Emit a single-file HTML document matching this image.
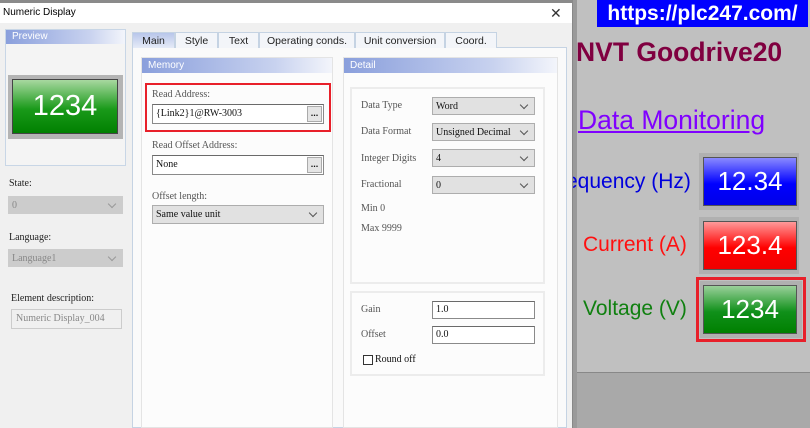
<!DOCTYPE html>
<html><head><meta charset="utf-8">
<style>
*{margin:0;padding:0;box-sizing:border-box}
body{width:810px;height:428px;overflow:hidden;position:relative;background:#c0c0c0;font-family:"Liberation Serif",serif;font-size:10px;color:#333}
.a{position:absolute}
.sans{font-family:"Liberation Sans",sans-serif}
.hdr{position:absolute;height:15px;background:linear-gradient(90deg,#8a9fdc,#c8d2ef 70%,#f3f5fb);color:#fff;font-family:"Liberation Sans",sans-serif;font-size:10px;line-height:15px;padding-left:6px}
.inp{position:absolute;background:#fff;border:1px solid #8a8a8a;border-top-color:#6a6a6a;font-size:10px;line-height:17px;padding-left:3px;color:#111}
.sel{position:absolute;background:#e1e1e1;border:1px solid #adadad;font-size:10px;line-height:17px;padding-left:3px;color:#111}
.sel:after{content:"";position:absolute;right:7px;top:4px;width:5px;height:5px;border-right:1px solid #555;border-bottom:1px solid #555;transform:rotate(45deg)}
.dis{background:#ccc;border-color:#ccc;color:#888}
.dis:after{border-color:#999}
.btn{position:absolute;right:1px;top:1px;width:15px;bottom:1px;background:#e5e5e5;border:1px solid #aaa;font-size:9px;text-align:center;line-height:12px;font-family:"Liberation Sans",sans-serif;font-weight:bold}
.tab{position:absolute;top:32px;height:16px;border:1px solid #c5d3e3;border-bottom:none;background:#f3f5f9;font-family:"Liberation Sans",sans-serif;font-size:10.5px;text-align:center;line-height:16px;color:#222}
.lbl{position:absolute;font-size:10px;color:#555}
.disp{position:absolute;color:#fff;font-family:"Liberation Sans",sans-serif;text-align:center}
</style></head><body>
<div class="a" style="left:573px;top:0;width:237px;height:428px;background:#c0c0c0"></div>
<div class="a" style="left:573px;top:372px;width:237px;height:56px;background:#a9a9a9;border-top:1px solid #888"></div>
<div class="a" style="left:573px;top:0;width:4px;height:428px;background:#9a9a9a"></div>
<div class="a sans" style="left:597px;top:0;width:211px;height:27px;background:#0000ff;color:#fff;font-weight:bold;font-size:21px;line-height:27px;text-align:center">https://plc247.com/</div>
<div class="a sans" style="left:576px;top:37px;color:#800040;font-weight:bold;font-size:26.5px;line-height:30px">NVT Goodrive20</div>
<div class="a sans" style="left:578px;top:104px;color:#8000ff;font-size:26.5px;line-height:32px;text-decoration:underline">Data Monitoring</div>
<div class="a sans" style="left:566px;top:168px;color:#0000dd;font-size:21px;line-height:28px">equency (Hz)</div>
<div class="a sans" style="left:583px;top:231px;color:#ff1010;font-size:21px;line-height:28px">Current (A)</div>
<div class="a sans" style="left:583px;top:295px;color:#108010;font-size:21px;line-height:28px">Voltage (V)</div>
<div class="a" style="left:699px;top:153px;width:100px;height:57px;background:#b0b0b0"></div>
<div class="disp" style="left:703px;top:157px;width:94px;height:49px;border:1px solid #555;background:linear-gradient(#8a8aff,#0000ff 55%,#0000e8);font-size:26px;line-height:47px">12.34</div>
<div class="a" style="left:699px;top:217px;width:100px;height:57px;background:#b0b0b0"></div>
<div class="disp" style="left:703px;top:221px;width:94px;height:49px;border:1px solid #555;background:linear-gradient(#ff9a9a,#ff0000 55%,#f00000);font-size:26px;line-height:47px">123.4</div>
<div class="a" style="left:696px;top:277px;width:110px;height:65px;border:3px solid #e8202a"></div>
<div class="a" style="left:700px;top:281px;width:102px;height:57px;background:#b0b0b0"></div>
<div class="disp" style="left:703px;top:285px;width:94px;height:49px;border:1px solid #555;background:linear-gradient(#9ad09a,#10901a 55%,#008000);font-size:26px;line-height:47px">1234</div>

<div class="a" style="left:0;top:0;width:573px;height:428px;background:#f0f0f0;border-right:1px solid #888"></div>
<div class="a" style="left:0;top:0;width:573px;height:3px;background:#8a8a8a"></div>
<div class="a sans" style="left:0;top:3px;width:572px;height:20px;background:#fff;font-size:10px;line-height:20px;padding-left:3px;color:#000">Numeric Display</div>
<div class="a sans" style="left:550px;top:3px;font-size:14px;line-height:20px;color:#333">✕</div>

<div class="a" style="left:5px;top:29px;width:121px;height:137px;border:1px solid #c8d6e6;background:#f4f4f4"></div>
<div class="hdr" style="left:6px;top:30px;width:119px;height:14px;line-height:14px">Preview</div>
<div class="a" style="left:8px;top:75px;width:115px;height:64px;background:#b4b4b4"></div>
<div class="disp" style="left:12px;top:79px;width:106px;height:55px;border:1px solid #444;background:linear-gradient(#a8d8a0,#1a9a1a 55%,#008000);font-size:29px;line-height:53px">1234</div>
<div class="lbl" style="left:9px;top:178px;color:#222">State:</div>
<div class="sel dis" style="left:8px;top:196px;width:115px;height:18px">0</div>
<div class="lbl" style="left:9px;top:232px;color:#222">Language:</div>
<div class="sel dis" style="left:8px;top:249px;width:115px;height:18px">Language1</div>
<div class="lbl" style="left:11px;top:293px;color:#222">Element description:</div>
<div class="a" style="left:11px;top:309px;width:111px;height:20px;border:1px solid #ccc;background:#f0f0f0;color:#888;font-size:10px;line-height:18px;padding-left:4px">Numeric Display_004</div>

<div class="a" style="left:132px;top:47px;width:435px;height:381px;background:#fafafa;border:1px solid #c5d3e3"></div>
<div class="tab" style="left:132px;width:43px;background:linear-gradient(#b8c6ea,#e6ebf7);">Main</div>
<div class="tab" style="left:175px;width:43px">Style</div>
<div class="tab" style="left:218px;width:41px">Text</div>
<div class="tab" style="left:259px;width:96px">Operating conds.</div>
<div class="tab" style="left:355px;width:90px">Unit conversion</div>
<div class="tab" style="left:445px;width:52px">Coord.</div>

<div class="a" style="left:141px;top:57px;width:192px;height:371px;border:1px solid #e4e4e4;background:#fcfcfc"></div>
<div class="hdr" style="left:142px;top:58px;width:190px">Memory</div>
<div class="a" style="left:145px;top:83px;width:186px;height:49px;border:2px solid #e8202a"></div>
<div class="lbl" style="left:152px;top:89px">Read Address:</div>
<div class="inp" style="left:152px;top:104px;width:172px;height:20px">{Link2}1@RW-3003<div class="btn">...</div></div>
<div class="lbl" style="left:152px;top:140px">Read Offset Address:</div>
<div class="inp" style="left:152px;top:155px;width:172px;height:20px">None<div class="btn">...</div></div>
<div class="lbl" style="left:152px;top:191px">Offset length:</div>
<div class="sel" style="left:152px;top:205px;width:172px;height:19px">Same value unit</div>

<div class="a" style="left:343px;top:57px;width:215px;height:371px;border:1px solid #e4e4e4;background:#fcfcfc"></div>
<div class="hdr" style="left:344px;top:58px;width:213px">Detail</div>
<div class="a" style="left:350px;top:87px;width:195px;height:197px;border:2px solid #ececec"></div>
<div class="lbl" style="left:361px;top:100px">Data Type</div>
<div class="sel" style="left:432px;top:97px;width:103px;height:18px">Word</div>
<div class="lbl" style="left:361px;top:126px">Data Format</div>
<div class="sel" style="left:432px;top:123px;width:103px;height:18px">Unsigned Decimal</div>
<div class="lbl" style="left:361px;top:153px">Integer Digits</div>
<div class="sel" style="left:432px;top:149px;width:103px;height:18px">4</div>
<div class="lbl" style="left:361px;top:179px">Fractional</div>
<div class="sel" style="left:432px;top:176px;width:103px;height:18px">0</div>
<div class="lbl" style="left:361px;top:203px">Min 0</div>
<div class="lbl" style="left:361px;top:223px">Max 9999</div>
<div class="a" style="left:350px;top:291px;width:195px;height:85px;border:2px solid #ececec"></div>
<div class="lbl" style="left:361px;top:304px">Gain</div>
<div class="inp" style="left:432px;top:301px;width:103px;height:18px;line-height:15px">1.0</div>
<div class="lbl" style="left:361px;top:329px">Offset</div>
<div class="inp" style="left:432px;top:326px;width:103px;height:18px;line-height:15px">0.0</div>
<div class="a" style="left:363px;top:355px;width:10px;height:10px;border:1px solid #333;background:#fff"></div>
<div class="lbl" style="left:375px;top:354px;color:#111">Round off</div>
</body></html>
